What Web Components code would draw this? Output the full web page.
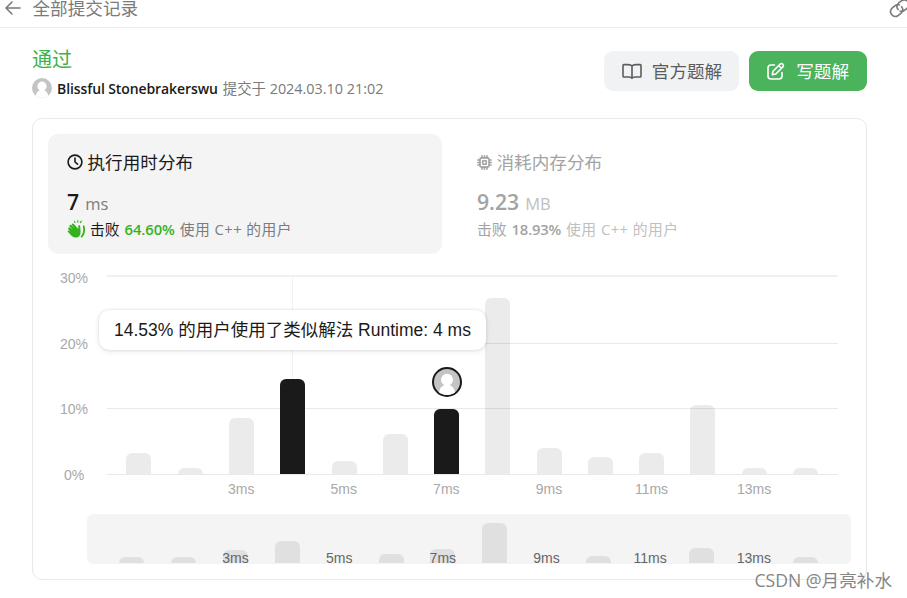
<!DOCTYPE html>
<html lang="zh-CN">
<head>
<meta charset="UTF-8">
<title>全部提交记录</title>
<style>
	html, body{
		margin:0;
		height:100%;
		overflow:hidden;
		background:#fff;
		color:#1a1a1a;
		font-family:"Open Sans", "Noto Sans CJK SC", sans-serif;
	}
</style>
</head>
<body>
<submission-page></submission-page>

<script>
const ICONS = {
	arrow: '<path d="M7 2 1 8 7 14M1.3 8H15"/>',
	link: '<g transform="rotate(-38 10 8)"><path d="M11.5 5.2Q10.4 3.2 8 3.2H4Q-.6 3.6-.6 8Q-.6 12.4 4 12.8H7.5Q12 12.4 12 8M8.2 10.6Q9.6 12.6 12 12.6H15.5Q20 12.2 20 8Q20 3.6 15.5 3.2H12Q7.6 3.6 7.6 8"/></g>',
	book: '<path d="M10 3.2C9.3 2 8 1.6 6 1.6H1.8Q1 1.6 1 2.4V13.2Q1 14 1.8 14H7Q9.2 14 10 15.2Q10.8 14 13 14H18.2Q19 14 19 13.2V2.4Q19 1.6 18.2 1.6H14C12 1.6 10.7 2 10 3.2V15"/>',
	pen: '<path d="M7.5 3H4Q1 3 1 6V14Q1 17 4 17H12Q15 17 15 14V10.5M6 9.2 13.1 2.1Q14.4.9 15.8 2.2Q17.1 3.6 15.9 4.9L8.8 12 5.3 12.7ZM11.7 3.6 14.4 6.3"/>',
	clock: '<circle cx="8" cy="8" r="6.9"/><path d="M8 4V8L10.5 10.2"/>',
	chip: '<rect x="2.9" y="2.9" width="9.2" height="9.2" rx="1.6"/><rect x="5.7" y="5.7" width="3.6" height="3.6" rx=".5"/><path d="M5 .8V3M7.5 .8V3M10 .8V3M5 12V14.2M7.5 12V14.2M10 12V14.2M.8 5H3M.8 7.5H3M.8 10H3M12 5H14.2M12 7.5H14.2M12 10H14.2"/>',
	clap: '<g stroke="none" fill="currentColor"><path d="M1.5 7.8Q2.3 7 3.2 7.7L5.5 9.5 2.6 6.4Q2.1 5.3 3 4.8Q3.7 4.4 4.4 5.1L7.8 8.5 5 5Q4.5 3.9 5.5 3.5Q6.2 3.3 6.9 4L11.3 8.9V6.2Q11.4 4.8 12.3 4.9Q13.1 5 13.2 6.2L13.6 11.4Q13.6 15.5 11.2 17Q7.7 18.5 4.8 15.9L1 12.1Q.3 11.2 1 10.6Q1.7 10.2 2.5 10.9L3.3 11.5 1.3 9.3Q.9 8.4 1.5 7.8Z"/></g><path d="M16.8 6.3Q18 13.2 14.6 16.6" stroke-width="1.8"/><path d="M8 2.5 7.4 1.3M10.8 2.2V.5M13.3 2.6 14.3 1.1" stroke-width="1.1"/>',
};

// 선으로 그리는 아이콘
class UiIcon extends HTMLElement {
	constructor() {
		super();
		this.attachShadow({mode: "open"});
	}

	connectedCallback() {
		const box = this.getAttribute('box') || '16 16';
		const [w, h] = box.split(' ');
		this.shadowRoot.innerHTML = `
			<style>
				:host{ display:block; flex:none; }
				svg{ display:block; overflow:visible; }
			</style>
			<svg width="${w}" height="${h}" viewBox="0 0 ${box}" fill="none" stroke="currentColor"
				stroke-width="${this.getAttribute('stroke') || 1.6}" stroke-linecap="round" stroke-linejoin="round">
				${ICONS[this.getAttribute('name')]}
			</svg>
		`;
	}
}

class UserAvatar extends HTMLElement {
	constructor() {
		super();
		this.attachShadow({mode: "open"});
		this.shadowRoot.innerHTML = `
			<style>
				:host{
					display:block;
					flex:none;
					width:20px;
					height:20px;
					border-radius:50%;
					overflow:hidden;
					background:#c4c4c4;
				}
				svg{ display:block; width:100%; height:100%; }
			</style>
			<svg viewBox="0 0 20 20" fill="#fff">
				<circle cx="10" cy="8.2" r="4.6"/>
				<path d="M7.6 11H12.4V12.6Q16 13.6 16.5 20H3.5Q4 13.6 7.6 12.6Z"/>
			</svg>
		`;
	}
}

class ActionButton extends HTMLElement {
	constructor() {
		super();
		this.attachShadow({mode: "open"});
		this.shadowRoot.innerHTML = `
			<style>
				:host{
					display:flex;
					align-items:center;
					box-sizing:border-box;
					height:40px;
					padding:0 17px 0 18px;
					gap:10px;
					border-radius:9px;
					background:#f1f2f4;
					color:#5c5c5c;
					font-size:17.6px;
					white-space:nowrap;
				}
				:host([primary]){
					gap:11px;
					padding:0 18px;
					background:#4bb35b;
					color:#fff;
				}
				span{ margin-top:-2px; }
			</style>
			<slot name="icon"></slot><span><slot></slot></span>
		`;
	}
}

class StatTab extends HTMLElement {
	constructor() {
		super();
		this.attachShadow({mode: "open"});
		this.shadowRoot.innerHTML = `
			<style>
				:host{
					display:flex;
					flex-direction:column;
					box-sizing:border-box;
					height:120px;
					padding:15px 19px 0;
					border-radius:10px;
					color:#a3a3a3;
					--sub:#c0c0c0;
				}
				:host([active]){
					background:#f4f4f4;
					color:#1a1a1a;
					--sub:#7c7c7c;
				}
				.head, .value, .beats{ display:flex; white-space:nowrap; }
				.head{
					align-items:center;
					gap:4.5px;
					height:26px;
					font-size:17.6px;
				}
				.head ::slotted([slot=title]){ margin-top:-2px; }
				.value{
					align-items:baseline;
					gap:6px;
					height:30px;
					margin-top:12px;
					line-height:30px;
					font-size:21.2px;
					font-weight:600;
				}
				.value ::slotted([slot=unit]){
					font-size:16.5px;
					font-weight:400;
					color:var(--sub);
				}
				.beats{
					align-items:center;
					height:24px;
					font-size:14.8px;
				}
			</style>
			<div class="head"><slot name="icon"></slot><slot name="title"></slot></div>
			<div class="value"><slot name="value"></slot><slot name="unit"></slot></div>
			<div class="beats"><slot name="beats"></slot></div>
		`;
	}
}

class RuntimeChart extends HTMLElement {
	constructor() {
		super();
		this.attachShadow({mode: "open"});
		// 막대 높이(px), 1ms ~ 14ms
		const bars = [21.3, 6.3, 56, 95, 12.7, 40.3, 65, 176.3, 26.3, 17.3, 21.3, 69, 6.3, 6.3];
		const mini = [6.4, 6.4, 12.7, 21.7, 0, 8.7, 13.7, 40, 0, 6.6, 0, 15, 0, 6.4];
		const label = i => i >= 2 && i % 2 === 0 ? `<span>${i + 1}ms</span>` : '<span></span>';

		this.shadowRoot.innerHTML = `
			<style>
				:host{
					display:block;
					padding-left:15px;
					font-family:"Liberation Sans", "Noto Sans CJK SC", sans-serif;
					font-size:14px;
					color:#a8a8a8;
				}
				.main{ display:flex; height:199px; }
				.yaxis{
					display:flex;
					flex-direction:column;
					justify-content:space-between;
					align-items:center;
					width:28px;
					height:213px;
					margin:-6px 19px 0 12px;
					line-height:16px;
				}
				.plot{ position:relative; width:731px; height:199px; }
				.grid{ position:absolute; inset:0; width:100%; height:100%; overflow:visible; }
				.bars{
					display:grid;
					grid-template-columns:repeat(14, 1fr);
					align-items:end;
					justify-items:center;
				}
				.plot .bars{ position:relative; height:198px; padding:0 6.9px 0 6.3px; }
				.bar{
					width:25px;
					background:rgba(0,0,0,.08);
					border-radius:6px 6px 0 0;
				}
				.bar.on{ background:#1a1a1a; }
				.xaxis{
					display:grid;
					grid-template-columns:repeat(14, 1fr);
					margin:6px 35px 0 65px;
					justify-items:center;
					line-height:16px;
				}
				.mini{
					position:relative;
					height:50px;
					margin:17px 15px 0 39px;
					border-radius:6px;
					background:#f4f4f4;
				}
				.mini .bars{ height:49px; padding:0 19.5px 0 19px; }
				.mini .xaxis{
					position:absolute;
					left:19px;
					right:19.5px;
					bottom:-2px;
					margin:0;
					color:#666;
				}
				user-avatar{
					position:absolute;
					left:325px;
					top:91px;
					width:26px;
					height:26px;
					border:2px solid #1a1a1a;
				}
				.tip{
					position:absolute;
					left:-8px;
					top:34px;
					width:387px;
					height:40px;
					border-radius:10px;
					background:#fff;
					box-shadow:0 0 3px rgba(0,0,0,.14), 0 2px 6px rgba(0,0,0,.07);
					color:#1a1a1a;
					font-size:17.5px;
					line-height:40px;
					text-align:center;
					white-space:nowrap;
				}
			</style>
			<div class="main">
				<div class="yaxis"><span>30%</span><span>20%</span><span>10%</span><span>0%</span></div>
				<div class="plot">
					<svg class="grid" fill="#e9e9e9">
						<rect width="731" height="2" y="-1" fill="#f0f0f0"/>
						<rect y="67" width="731" height="1"/>
						<rect y="132" width="731" height="1"/>
						<rect y="198" width="731" height="1"/>
						<rect x="185" width="1" height="103" fill="#f1f1f1"/>
					</svg>
					<div class="bars">
						${bars.map((h, i) => `<div class="bar${i === 3 || i === 6 ? ' on' : ''}" style="height:${h}px"></div>`).join('')}
					</div>
					<user-avatar></user-avatar>
					<div class="tip"><slot name="tip"></slot></div>
				</div>
			</div>
			<div class="xaxis">${bars.map((h, i) => label(i)).join('')}</div>
			<div class="mini">
				<div class="bars">
					${mini.map(h => `<div class="bar" style="height:${h}px"></div>`).join('')}
				</div>
				<div class="xaxis">${mini.map((h, i) => label(i)).join('')}</div>
			</div>
		`;
	}
}

class SubmissionPage extends HTMLElement {
	constructor() {
		super();
		this.attachShadow({mode: "open"});
		this.shadowRoot.innerHTML = `
			<style>
				:host{ display:block; position:relative; height:598px; overflow:hidden; }
				header{
					display:flex;
					align-items:center;
					box-sizing:border-box;
					height:28px;
					padding:0 0 11px 5px;
					border-bottom:1px solid #ececec;
					color:#7a7a7a;
					font-size:17.6px;
				}
				header .text{ margin:0 0 0 11.5px; flex:1; line-height:18px; }
				header .link{ margin-right:-3px; }
				.summary{
					display:flex;
					align-items:flex-start;
					justify-content:space-between;
					height:90px;
					padding:0 40px 0 32px;
				}
				.status{
					margin-top:17px;
					height:29px;
					line-height:29px;
					font-size:20px;
					color:#40b14f;
				}
				.by{
					display:flex;
					align-items:center;
					height:22px;
					gap:5px;
					margin-top:3px;
					font-size:14.4px;
					color:#7a7a7a;
					white-space:nowrap;
				}
				.by b{ font-weight:600; color:#1a1a1a; font-size:14px; letter-spacing:-.1px; }
				.by span{ margin-top:-1px; }
				.actions{ display:flex; gap:10px; margin-top:23px; }
				.card{
					box-sizing:border-box;
					width:835px;
					height:462px;
					margin-left:32px;
					padding:15px 0 0;
					border:1px solid #e9e9e9;
					border-radius:10px;
				}
				.tabs{
					display:grid;
					grid-template-columns:394px 394px;
					gap:16px;
					padding-left:15px;
				}
				.dim{ color:var(--sub); letter-spacing:.45px; }
				.green{ color:#35b31e; font-weight:600; letter-spacing:-.1px; }
				.beats{ display:flex; gap:5px; align-items:center; margin-top:-1px; }
				.beats b{ font-weight:600; letter-spacing:-.2px; }
				.beats ui-icon{ color:#35b31e; margin-top:1px; }
				runtime-chart{ margin-top:22px; }
				.mark{
					position:absolute;
					right:15px;
					bottom:6px;
					font-size:17.6px;
					line-height:24px;
					color:#858585;
				}
			</style>
			<header>
				<ui-icon name="arrow" box="16 16"></ui-icon>
				<span class="text">全部提交记录</span>
				<ui-icon class="link" name="link" box="20 16"></ui-icon>
			</header>
			<section class="summary">
				<div>
					<div class="status">通过</div>
					<div class="by"><user-avatar></user-avatar><b>Blissful Stonebrakerswu</b><span>提交于 2024.03.10 21:02</span></div>
				</div>
				<div class="actions">
					<action-button><ui-icon slot="icon" name="book" box="20 16"></ui-icon>官方题解</action-button>
					<action-button primary><ui-icon slot="icon" name="pen" box="18 18"></ui-icon>写题解</action-button>
				</div>
			</section>
			<section class="card">
				<div class="tabs">
					<stat-tab active>
						<ui-icon slot="icon" name="clock"></ui-icon>
						<span slot="title">执行用时分布</span>
						<span slot="value">7</span><span slot="unit">ms</span>
						<div slot="beats" class="beats"><ui-icon name="clap" box="18 18"></ui-icon><span>击败</span><span class="green">64.60%</span><span class="dim">使用 C++ 的用户</span></div>
					</stat-tab>
					<stat-tab>
						<ui-icon slot="icon" name="chip" box="15 15"></ui-icon>
						<span slot="title">消耗内存分布</span>
						<span slot="value">9.23</span><span slot="unit">MB</span>
						<div slot="beats" class="beats"><span>击败</span><b>18.93%</b><span class="dim">使用 C++ 的用户</span></div>
					</stat-tab>
				</div>
				<runtime-chart><span slot="tip">14.53% 的用户使用了类似解法 Runtime: 4 ms</span></runtime-chart>
			</section>
			<div class="mark">CSDN @月亮补水</div>
		`;
	}
}

customElements.define('ui-icon', UiIcon);
customElements.define('user-avatar', UserAvatar);
customElements.define('action-button', ActionButton);
customElements.define('stat-tab', StatTab);
customElements.define('runtime-chart', RuntimeChart);
customElements.define('submission-page', SubmissionPage);
</script>
</body>
</html>
